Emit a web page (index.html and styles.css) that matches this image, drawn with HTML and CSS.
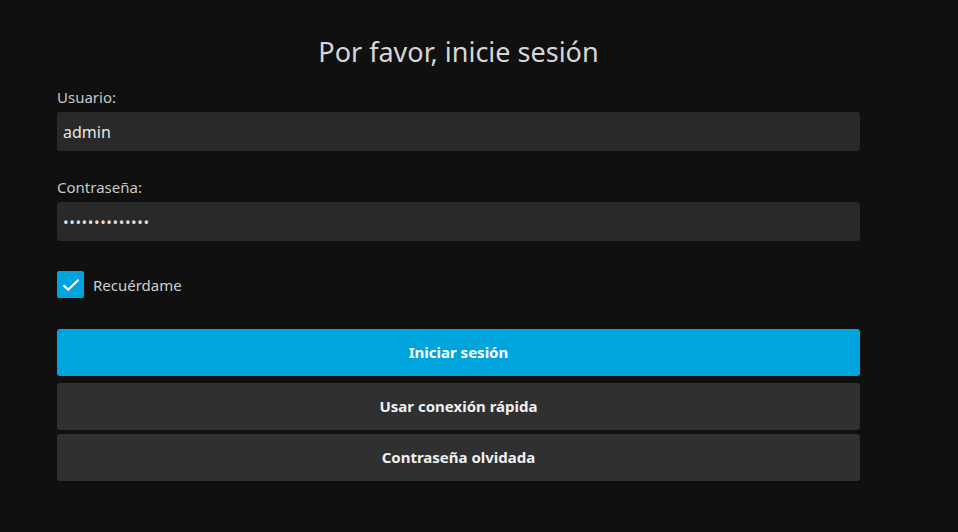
FILE: index.html
```html
<!DOCTYPE html>
<html lang="es">
<head>
<meta charset="utf-8">
<title>Iniciar sesión</title>
<link rel="stylesheet" href="styles.css">
</head>
<body>
<div class="page">
  <form class="login">
    <h1 class="title">Por favor, inicie sesión</h1>
    <div class="field">
      <label class="label">Usuario:</label>
      <div class="input">admin</div>
    </div>
    <div class="field">
      <label class="label">Contraseña:</label>
      <div class="input dots">••••••••••••••</div>
    </div>
    <div class="remember">
      <span class="check">
        <svg width="18" height="14" viewBox="0 0 18 14"><path d="M1.5 7.2 L6.2 11.8 L16.5 1.8" fill="none" stroke="#fff" stroke-width="2.2"/></svg>
      </span>
      <span class="remember-text">Recuérdame</span>
    </div>
    <div class="btn primary">Iniciar sesión</div>
    <div class="btn b2">Usar conexión rápida</div>
    <div class="btn b3">Contraseña olvidada</div>
  </form>
</div>
</body>
</html>
```

FILE: styles.css
```css
html, body {
  margin: 0;
  padding: 0;
  background: #101010;
  height: 100%;
}
body {
  font-family: "Noto Sans", "Open Sans", sans-serif;
  color: rgba(255,255,255,0.8);
}
.page {
  padding: 0 98px 0 57px;
}
.login {
  display: flex;
  flex-direction: column;
}
.title {
  margin: 34px 0 0;
  text-align: center;
  font-size: 27px;
  font-weight: 400;
  line-height: 36px;
  color: #d6d6d6;
}
.field {
  display: flex;
  flex-direction: column;
}
.label {
  font-size: 15px;
  line-height: 20px;
  margin-top: 17px;
  margin-bottom: 5px;
  color: #c8c8c8;
}
.field + .field .label {
  margin-top: 26px;
}
.input {
  height: 39px;
  background: #292929;
  border-radius: 3px;
  box-sizing: border-box;
  padding: 0 6px;
  display: flex;
  align-items: center;
  font-size: 16px;
  color: #e6e6e6;
}
.dots {
  font-size: 15px;
  letter-spacing: 0.55px;
  color: #dcdcdc;
}
.remember {
  display: flex;
  align-items: center;
  margin-top: 30px;
  height: 27px;
}
.check {
  width: 27px;
  height: 27px;
  background: #00a4dc;
  border-radius: 2px;
  display: flex;
  align-items: center;
  justify-content: center;
}
.remember-text {
  margin-left: 9px;
  font-size: 15px;
  color: #cfcfcf;
}
.btn {
  height: 47px;
  border-radius: 3px;
  display: flex;
  align-items: center;
  justify-content: center;
  font-size: 15px;
  font-weight: 700;
  color: #f0f0f0;
  background: #303030;
  padding-bottom: 1px;
  box-sizing: border-box;
}
.primary {
  margin-top: 31px;
  background: #00a4dc;
  color: #fff;
}
.b2 { margin-top: 7px; }
.b3 { margin-top: 4px; }
```
